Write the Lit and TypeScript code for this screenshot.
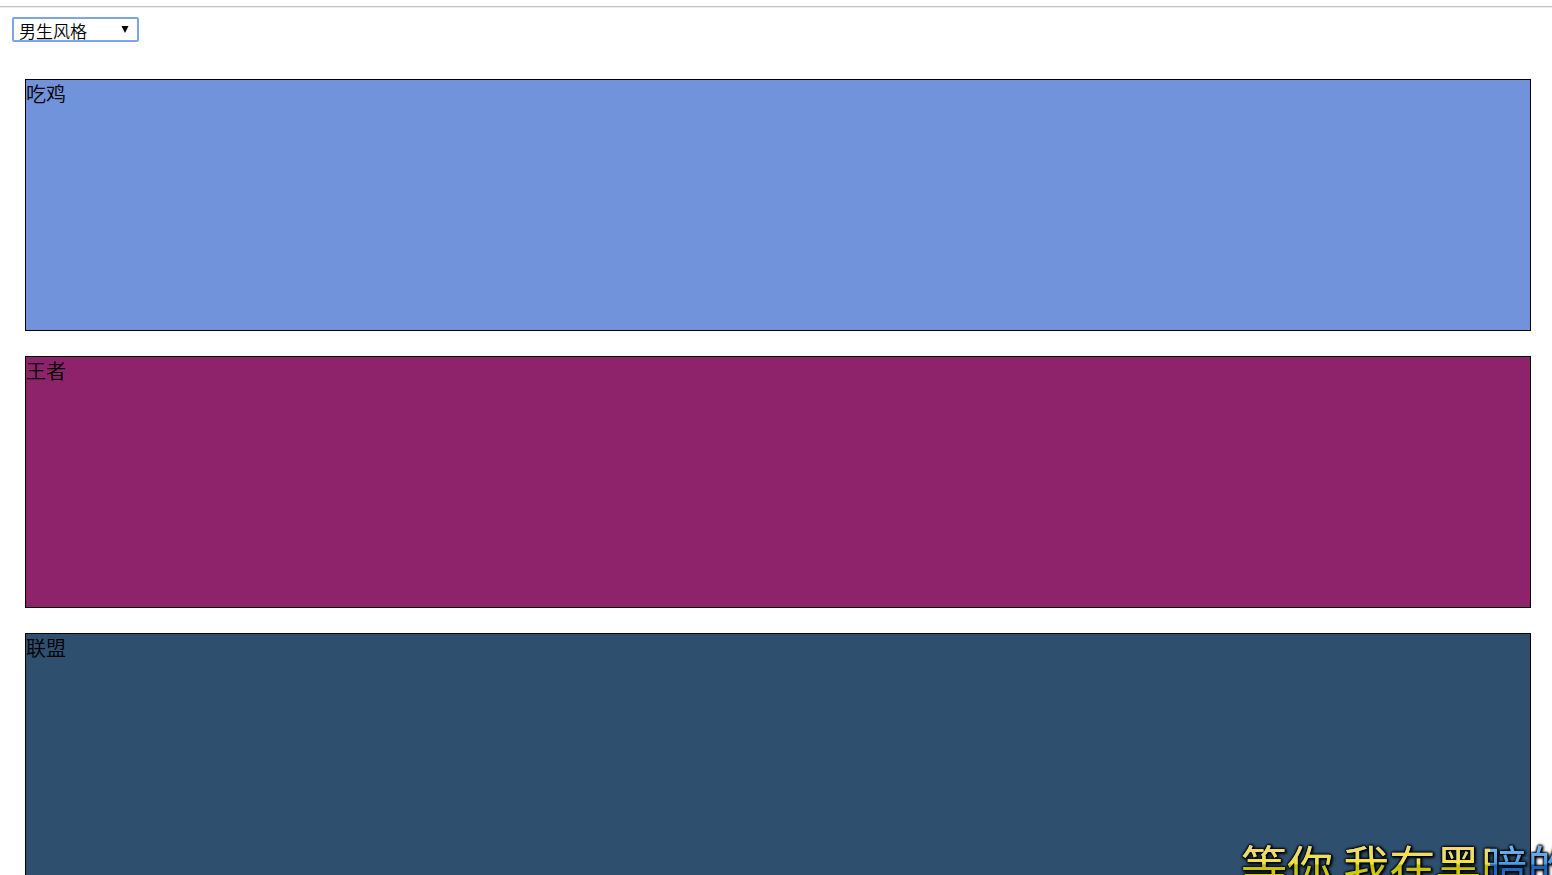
import { LitElement, html, css } from "lit";
import { customElement, state } from "lit/decorators.js";

interface Style {
  name: string;
  items: { label: string; tone: string }[];
}

const STYLES: Style[] = [
  {
    name: "男生风格",
    items: [
      { label: "吃鸡", tone: "blue" },
      { label: "王者", tone: "plum" },
      { label: "联盟", tone: "slate" },
    ],
  },
];

@customElement("app-root")
export class AppRoot extends LitElement {
  @state() private selected = 0;

  static styles = css`
    :host {
      display: block;
      box-sizing: border-box;
      height: 100vh;
      overflow: hidden;
      padding-top: 6px;
      background: #fff;
      color: #000;
      font-family: "Noto Sans CJK SC", "Noto Sans", sans-serif;
      font-weight: 350;
    }
    .rule {
      height: 1px;
      margin: 0;
      border: 0;
      background: #c4c4c4;
      box-shadow: 0 1px 0 #ececec;
    }
    .toolbar {
      display: flex;
      padding: 10px 12px 0;
    }
    .picker {
      position: relative;
      display: flex;
    }
    .select {
      appearance: none;
      box-sizing: border-box;
      width: 127px;
      height: 25px;
      margin: 0;
      padding: 2px 24px 0 5px;
      border: 2px solid #78a5ee;
      border-radius: 2px;
      outline: none;
      background: #fff;
      color: #000;
      font: inherit;
      font-size: 17px;
      line-height: 20px;
    }
    .arrow {
      position: absolute;
      top: 9px;
      right: 10px;
      width: 8px;
      height: 7px;
      pointer-events: none;
    }
    .list {
      display: flex;
      flex-direction: column;
      gap: 25px;
      margin: 0;
      padding: 37px 21px 25px 25px;
      list-style: none;
    }
    .card {
      box-sizing: border-box;
      min-height: 252px;
      border: 1px solid #000;
      font-size: 20px;
      line-height: 28px;
    }
    .blue {
      background: #7093db;
    }
    .plum {
      background: #8e236b;
    }
    .slate {
      background: #2f4f6f;
    }
    .lyrics {
      position: fixed;
      right: 0;
      bottom: 0;
      width: 314px;
      height: 41px;
      overflow: hidden;
      pointer-events: none;
    }
    .line {
      width: max-content;
      margin: 0;
      padding-left: 3px;
      font-size: 46px;
      font-weight: 400;
      line-height: 60px;
      white-space: nowrap;
      color: transparent;
      background:
        linear-gradient(#f3d77a 10px, #f2e23c 30px, #c6bd00 31px, #e0d800 50px) 0 0 / 252px 100% no-repeat,
        linear-gradient(#7db8f0 10px, #4a9ae6 30px, #1560b8 31px, #2f80d8 50px);
      background-clip: text;
      -webkit-background-clip: text;
      filter: drop-shadow(0 0 1px #000) drop-shadow(0 0 1px #000) drop-shadow(1px 1px 1px #000);
    }
  `;

  private onChange(event: Event) {
    this.selected = (event.target as HTMLSelectElement).selectedIndex;
  }

  render() {
    return html`
      <hr class="rule" />
      <div class="toolbar">
        <div class="picker">
          <select class="select" aria-label="风格" @change=${this.onChange}>
            ${STYLES.map((style) => html`<option>${style.name}</option>`)}
          </select>
          <svg class="arrow" viewBox="0 0 8 7" aria-hidden="true">
            <path d="M0.5 0H7.5L4 7Z" fill="#000" />
          </svg>
        </div>
      </div>
      <ul class="list">
        ${STYLES[this.selected].items.map(
          (item) => html`<li class="card ${item.tone}">${item.label}</li>`,
        )}
      </ul>
      <div class="lyrics"><p class="line">等你 我在黑暗的</p></div>
    `;
  }
}
